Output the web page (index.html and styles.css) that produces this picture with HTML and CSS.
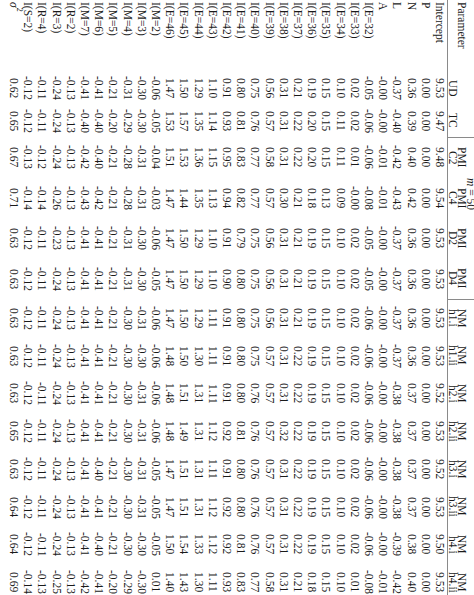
FILE: index.html
```html
<!DOCTYPE html>
<html lang="en">
<head>
<meta charset="utf-8">
<title>Estimates, m = 50</title>
<link rel="stylesheet" href="styles.css">
</head>
<body>
<div class="page">
<table class="tbl">
<tr class="hd hd1">
<th class="w-lab"></th><th class="w-a"></th><th class="w-a"></th><th class="w-pm rl rr mhead" colspan="4"><i>m</i> = 50</th><th class="w-nm"></th><th class="w-nm"></th><th class="w-nm"></th><th class="w-nm"></th><th class="w-nm"></th><th class="w-nm"></th><th class="w-nm"></th><th class="w-nm"></th>
</tr>
<tr class="hd">
<th class="lab">Parameter</th><th></th><th></th><th class="rl">PMI</th><th>PMI</th><th>PMI</th><th>PMI</th><th class="rl">NM</th><th>NM</th><th>NM</th><th>NM</th><th>NM</th><th>NM</th><th>NM</th><th>NM</th>
</tr>
<tr class="hd hd3">
<th></th><th>UD</th><th>TC</th><th class="rl">C2</th><th>C4</th><th>D2</th><th>D4</th><th class="rl">h1.i</th><th>h1.ii</th><th>h2.i</th><th>h2.ii</th><th>h3.i</th><th>h3.ii</th><th>h4.i</th><th>h4.ii</th>
</tr>
<tr><th class="lab">Intercept</th><td>9.53</td><td>9.47</td><td>9.48</td><td>9.54</td><td>9.53</td><td>9.53</td><td>9.53</td><td>9.53</td><td>9.52</td><td>9.53</td><td>9.52</td><td>9.53</td><td>9.50</td><td>9.53</td></tr>
<tr><th class="lab">P</th><td>0.00</td><td>0.00</td><td>0.00</td><td>0.00</td><td>0.00</td><td>0.00</td><td>0.00</td><td>0.00</td><td>0.00</td><td>0.00</td><td>0.00</td><td>0.00</td><td>0.00</td><td>0.00</td></tr>
<tr><th class="lab">N</th><td>0.36</td><td>0.39</td><td>0.40</td><td>0.42</td><td>0.36</td><td>0.36</td><td>0.36</td><td>0.36</td><td>0.37</td><td>0.37</td><td>0.37</td><td>0.37</td><td>0.38</td><td>0.40</td></tr>
<tr><th class="lab">L</th><td>-0.37</td><td>-0.40</td><td>-0.42</td><td>-0.43</td><td>-0.37</td><td>-0.37</td><td>-0.37</td><td>-0.37</td><td>-0.38</td><td>-0.38</td><td>-0.38</td><td>-0.38</td><td>-0.39</td><td>-0.42</td></tr>
<tr><th class="lab">A</th><td>-0.00</td><td>-0.00</td><td>-0.01</td><td>-0.01</td><td>-0.00</td><td>-0.00</td><td>-0.00</td><td>-0.00</td><td>-0.00</td><td>-0.00</td><td>-0.00</td><td>-0.00</td><td>-0.00</td><td>-0.01</td></tr>
<tr><th class="lab">I(E=32)</th><td>-0.05</td><td>-0.06</td><td>-0.06</td><td>-0.08</td><td>-0.05</td><td>-0.05</td><td>-0.06</td><td>-0.06</td><td>-0.06</td><td>-0.06</td><td>-0.06</td><td>-0.06</td><td>-0.06</td><td>-0.08</td></tr>
<tr><th class="lab">I(E=33)</th><td>0.02</td><td>0.02</td><td>0.01</td><td>-0.00</td><td>0.02</td><td>0.02</td><td>0.02</td><td>0.02</td><td>0.02</td><td>0.02</td><td>0.02</td><td>0.02</td><td>0.02</td><td>0.01</td></tr>
<tr><th class="lab">I(E=34)</th><td>0.10</td><td>0.11</td><td>0.11</td><td>0.09</td><td>0.10</td><td>0.10</td><td>0.10</td><td>0.10</td><td>0.10</td><td>0.10</td><td>0.10</td><td>0.10</td><td>0.10</td><td>0.10</td></tr>
<tr><th class="lab">I(E=35)</th><td>0.15</td><td>0.15</td><td>0.15</td><td>0.13</td><td>0.15</td><td>0.15</td><td>0.15</td><td>0.15</td><td>0.15</td><td>0.15</td><td>0.15</td><td>0.15</td><td>0.15</td><td>0.15</td></tr>
<tr><th class="lab">I(E=36)</th><td>0.19</td><td>0.20</td><td>0.20</td><td>0.18</td><td>0.19</td><td>0.19</td><td>0.19</td><td>0.19</td><td>0.19</td><td>0.19</td><td>0.19</td><td>0.19</td><td>0.19</td><td>0.18</td></tr>
<tr><th class="lab">I(E=37)</th><td>0.21</td><td>0.22</td><td>0.22</td><td>0.21</td><td>0.21</td><td>0.21</td><td>0.21</td><td>0.22</td><td>0.22</td><td>0.22</td><td>0.22</td><td>0.22</td><td>0.22</td><td>0.21</td></tr>
<tr><th class="lab">I(E=38)</th><td>0.31</td><td>0.31</td><td>0.31</td><td>0.30</td><td>0.31</td><td>0.31</td><td>0.31</td><td>0.31</td><td>0.31</td><td>0.32</td><td>0.31</td><td>0.31</td><td>0.31</td><td>0.31</td></tr>
<tr><th class="lab">I(E=39)</th><td>0.56</td><td>0.57</td><td>0.58</td><td>0.57</td><td>0.56</td><td>0.56</td><td>0.56</td><td>0.57</td><td>0.57</td><td>0.57</td><td>0.57</td><td>0.57</td><td>0.57</td><td>0.58</td></tr>
<tr><th class="lab">I(E=40)</th><td>0.75</td><td>0.76</td><td>0.77</td><td>0.77</td><td>0.75</td><td>0.75</td><td>0.75</td><td>0.75</td><td>0.76</td><td>0.76</td><td>0.76</td><td>0.76</td><td>0.76</td><td>0.77</td></tr>
<tr><th class="lab">I(E=41)</th><td>0.80</td><td>0.81</td><td>0.83</td><td>0.82</td><td>0.79</td><td>0.80</td><td>0.80</td><td>0.80</td><td>0.80</td><td>0.81</td><td>0.80</td><td>0.80</td><td>0.81</td><td>0.83</td></tr>
<tr><th class="lab">I(E=42)</th><td>0.91</td><td>0.93</td><td>0.95</td><td>0.94</td><td>0.91</td><td>0.90</td><td>0.91</td><td>0.91</td><td>0.91</td><td>0.92</td><td>0.91</td><td>0.92</td><td>0.92</td><td>0.93</td></tr>
<tr><th class="lab">I(E=43)</th><td>1.10</td><td>1.14</td><td>1.15</td><td>1.13</td><td>1.10</td><td>1.10</td><td>1.11</td><td>1.11</td><td>1.11</td><td>1.12</td><td>1.11</td><td>1.12</td><td>1.12</td><td>1.11</td></tr>
<tr><th class="lab">I(E=44)</th><td>1.29</td><td>1.35</td><td>1.36</td><td>1.35</td><td>1.29</td><td>1.29</td><td>1.29</td><td>1.30</td><td>1.31</td><td>1.31</td><td>1.31</td><td>1.31</td><td>1.33</td><td>1.30</td></tr>
<tr><th class="lab">I(E=45)</th><td>1.50</td><td>1.57</td><td>1.53</td><td>1.44</td><td>1.50</td><td>1.50</td><td>1.50</td><td>1.50</td><td>1.51</td><td>1.49</td><td>1.51</td><td>1.51</td><td>1.54</td><td>1.43</td></tr>
<tr><th class="lab">I(E=46)</th><td>1.47</td><td>1.53</td><td>1.51</td><td>1.47</td><td>1.47</td><td>1.47</td><td>1.47</td><td>1.48</td><td>1.48</td><td>1.48</td><td>1.47</td><td>1.47</td><td>1.50</td><td>1.40</td></tr>
<tr><th class="lab">I(M=2)</th><td>-0.06</td><td>-0.05</td><td>-0.04</td><td>-0.03</td><td>-0.06</td><td>-0.05</td><td>-0.06</td><td>-0.06</td><td>-0.06</td><td>-0.06</td><td>-0.05</td><td>-0.05</td><td>-0.05</td><td>0.01</td></tr>
<tr><th class="lab">I(M=3)</th><td>-0.30</td><td>-0.30</td><td>-0.31</td><td>-0.31</td><td>-0.30</td><td>-0.30</td><td>-0.31</td><td>-0.30</td><td>-0.31</td><td>-0.31</td><td>-0.31</td><td>-0.31</td><td>-0.30</td><td>-0.30</td></tr>
<tr><th class="lab">I(M=4)</th><td>-0.31</td><td>-0.29</td><td>-0.28</td><td>-0.28</td><td>-0.31</td><td>-0.31</td><td>-0.30</td><td>-0.30</td><td>-0.30</td><td>-0.30</td><td>-0.30</td><td>-0.30</td><td>-0.30</td><td>-0.29</td></tr>
<tr><th class="lab">I(M=5)</th><td>-0.21</td><td>-0.20</td><td>-0.21</td><td>-0.21</td><td>-0.21</td><td>-0.21</td><td>-0.21</td><td>-0.21</td><td>-0.21</td><td>-0.21</td><td>-0.21</td><td>-0.21</td><td>-0.21</td><td>-0.20</td></tr>
<tr><th class="lab">I(M=6)</th><td>-0.41</td><td>-0.40</td><td>-0.40</td><td>-0.42</td><td>-0.41</td><td>-0.41</td><td>-0.41</td><td>-0.41</td><td>-0.41</td><td>-0.41</td><td>-0.40</td><td>-0.41</td><td>-0.40</td><td>-0.41</td></tr>
<tr><th class="lab">I(M=7)</th><td>-0.41</td><td>-0.40</td><td>-0.42</td><td>-0.43</td><td>-0.41</td><td>-0.41</td><td>-0.41</td><td>-0.41</td><td>-0.41</td><td>-0.41</td><td>-0.41</td><td>-0.41</td><td>-0.41</td><td>-0.42</td></tr>
<tr><th class="lab">I(R=2)</th><td>-0.13</td><td>-0.13</td><td>-0.13</td><td>-0.13</td><td>-0.13</td><td>-0.13</td><td>-0.13</td><td>-0.13</td><td>-0.13</td><td>-0.13</td><td>-0.13</td><td>-0.13</td><td>-0.13</td><td>-0.13</td></tr>
<tr><th class="lab">I(R=3)</th><td>-0.24</td><td>-0.24</td><td>-0.24</td><td>-0.26</td><td>-0.23</td><td>-0.24</td><td>-0.24</td><td>-0.24</td><td>-0.24</td><td>-0.24</td><td>-0.24</td><td>-0.24</td><td>-0.24</td><td>-0.25</td></tr>
<tr><th class="lab">I(R=4)</th><td>-0.11</td><td>-0.11</td><td>-0.12</td><td>-0.14</td><td>-0.11</td><td>-0.11</td><td>-0.11</td><td>-0.11</td><td>-0.11</td><td>-0.11</td><td>-0.11</td><td>-0.11</td><td>-0.11</td><td>-0.13</td></tr>
<tr><th class="lab">I(S=2)</th><td>-0.12</td><td>-0.12</td><td>-0.13</td><td>-0.14</td><td>-0.12</td><td>-0.12</td><td>-0.12</td><td>-0.12</td><td>-0.12</td><td>-0.12</td><td>-0.12</td><td>-0.12</td><td>-0.12</td><td>-0.14</td></tr>
<tr><th class="lab"><i>σ</i><sup>2</sup></th><td>0.62</td><td>0.65</td><td>0.67</td><td>0.71</td><td>0.63</td><td>0.63</td><td>0.63</td><td>0.63</td><td>0.63</td><td>0.65</td><td>0.63</td><td>0.64</td><td>0.64</td><td>0.69</td></tr>
</table>
</div>
</body>
</html>
```

FILE: styles.css
```css
html, body {
  margin: 0;
  padding: 0;
  background: #ffffff;
  overflow: hidden;
}

.page {
  width: 474px;
  height: 595px;
  overflow: hidden;
  display: flex;
  justify-content: flex-end;
  align-items: flex-start;
}

.tbl {
  writing-mode: vertical-rl;
  border-collapse: collapse;
  table-layout: fixed;
  inline-size: 601px;
  flex: none;
  margin-right: -2px;
  font-family: "Liberation Serif", "DejaVu Serif", serif;
  font-size: 11.5px;
  color: #1a1a1a;
}

.tbl th,
.tbl td {
  box-sizing: border-box;
  padding: 0;
  font-weight: normal;
  text-align: center;
  white-space: nowrap;
  line-height: 14.2px;
}

.tbl .lab {
  text-align: start;
  padding-inline-start: 2px;
}

.tbl .hd th {
  line-height: 9px;
}

.tbl .hd1 th {
  line-height: 10px;
}

.tbl .mhead {
  text-align: start;
  padding-inline-start: 40px;
}

.hd3 th {
  border-left: 1px solid #8a8a8a;
}

.tbl .rl {
  border-top: 1px solid #8a8a8a;
}

.tbl .rr {
  border-bottom: 1px solid #8a8a8a;
}

.w-lab { inline-size: 72px; }
.w-a { inline-size: 32.5px; }
.w-pm { inline-size: 162px; }
.w-nm { inline-size: 37.75px; }

.tbl i {
  font-style: italic;
}

.tbl sup {
  font-size: 70%;
  line-height: 0;
}
```
